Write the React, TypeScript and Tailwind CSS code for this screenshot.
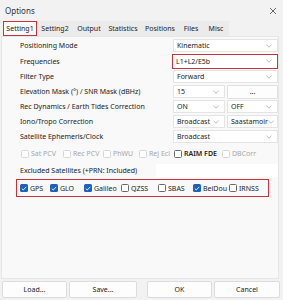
import React from "react";

const font = { fontFamily: '"Noto Sans", "Open Sans", sans-serif' };

function Chevron() {
  return (
    <svg width="6" height="4" viewBox="0 0 6 4" className="shrink-0">
      <polyline points="0.5,0.8 3,3.2 5.5,0.8" fill="none" stroke="#a8a8a8" strokeWidth="0.8" />
    </svg>
  );
}

function Combo({ value, w, red }: { value: string; w: string; red?: boolean }) {
  return (
    <div
      className={`${w} flex items-center justify-between bg-white pl-[3px] pr-[5px] ${
        red ? "h-[15px] border-[1.5px] border-[#c8343e]" : "h-[13px] border border-[#e4e4e4]"
      }`}
    >
      <span className="text-[7px] text-[#222] leading-none">{value}</span>
      <Chevron />
    </div>
  );
}

function Row({ label, children, h = "h-[15px]" }: { label: string; children: React.ReactNode; h?: string }) {
  return (
    <div className={`flex items-center ${h}`}>
      <div className="w-[172px] pl-[18px] text-[7px] text-[#222] leading-none">{label}</div>
      <div className="flex items-center gap-[2px]">{children}</div>
    </div>
  );
}

function Check({ label, checked, disabled, w, bold }: { label: string; checked?: boolean; disabled?: boolean; w: string; bold?: boolean }) {
  return (
    <div className={`${w} flex items-center gap-[2px] shrink-0`}>
      {checked ? (
        <div className="w-[8px] h-[8px] rounded-[1.5px] bg-[#1a62c0] flex items-center justify-center">
          <svg width="6" height="5" viewBox="0 0 6 5">
            <polyline points="0.8,2.6 2.3,4 5.2,0.9" fill="none" stroke="white" strokeWidth="0.9" />
          </svg>
        </div>
      ) : (
        <div
          className={`w-[8px] h-[8px] rounded-[1.5px] border bg-white ${
            disabled ? "border-[#d6d6d6]" : "border-[#6a6a6a]"
          }`}
        />
      )}
      <span
        className={`text-[7px] leading-none ${disabled ? "text-[#a6a6a6]" : "text-[#222]"} ${bold ? "font-semibold" : ""}`}
      >
        {label}
      </span>
    </div>
  );
}

export default function App() {
  const tabs = ["Setting2", "Output", "Statistics", "Positions", "Files", "Misc"];
  const tabW = ["w-[36px]", "w-[32px]", "w-[36px]", "w-[38px]", "w-[24px]", "w-[26px]"];
  return (
    <div className="w-[283px] h-[300px] bg-[#f2f2f2] overflow-hidden flex flex-col" style={font}>
      {/* Title bar */}
      <div className="h-[21px] flex items-center justify-between pl-[5px] pr-[6px]">
        <span className="text-[8px] text-[#333] leading-none">Options</span>
        <svg width="8" height="8" viewBox="0 0 8 8">
          <path d="M1 1 L7 7 M7 1 L1 7" stroke="#444" strokeWidth="0.8" />
        </svg>
      </div>
      {/* Tabs */}
      <div className="h-[15px] flex items-stretch pl-[3px]">
        <div className="w-[34px] border-[1.5px] border-[#c8343e] bg-[#fafafa] flex items-center justify-center text-[7px] text-[#222] leading-none">
          Setting1
        </div>
        <div className="flex items-stretch bg-[#ebebeb]">
          {tabs.map((t, i) => (
            <div key={t} className={`${tabW[i]} flex items-center justify-center text-[7px] text-[#222] leading-none`}>
              {t}
            </div>
          ))}
        </div>
      </div>
      {/* Panel */}
      <div className="mx-[1px] mr-[4px] h-[243px] bg-[#f9f9f9] border border-[#e6e6e6] flex flex-col pt-[1px]">
        <Row label="Positioning Mode">
          <Combo value="Kinematic" w="w-[105px]" />
        </Row>
        <Row label="Frequencies" h="h-[16px]">
          <Combo value="L1+L2/E5b" w="w-[106px]" red />
        </Row>
        <Row label="Filter Type">
          <Combo value="Forward" w="w-[105px]" />
        </Row>
        <Row label="Elevation Mask (°) / SNR Mask (dBHz)">
          <Combo value="15" w="w-[52px]" />
          <div className="w-[51px] h-[14px] bg-[#fdfdfd] border border-[#e0e0e0] rounded-[1px] flex items-center justify-center text-[7px] text-[#222] leading-none">
            ...
          </div>
        </Row>
        <Row label="Rec Dynamics / Earth Tides Correction">
          <Combo value="ON" w="w-[52px]" />
          <Combo value="OFF" w="w-[51px]" />
        </Row>
        <Row label="Iono/Tropo Correction">
          <Combo value="Broadcast" w="w-[52px]" />
          <Combo value="Saastamoir" w="w-[51px]" />
        </Row>
        <Row label="Satellite Ephemeris/Clock">
          <Combo value="Broadcast" w="w-[105px]" />
        </Row>
        <div className="h-[17px] mt-[1px] flex items-center pl-[19px]">
          <Check label="Sat PCV" disabled w="w-[42px]" />
          <Check label="Rec PCV" disabled w="w-[40px]" />
          <Check label="PhWU" disabled w="w-[36px]" />
          <Check label="Rej Ecl" disabled w="w-[35px]" />
          <Check label="RAIM FDE" bold w="w-[48px]" />
          <Check label="DBCorr" disabled w="w-[40px]" />
        </div>
        <div className="h-[17px] flex items-center">
          <div className="w-[154px] pl-[18px] text-[7px] text-[#222] leading-none">Excluded Satellites (+PRN: Included)</div>
          <div className="w-[122px] h-[13px] bg-white" />
        </div>
        <div className="ml-[14px] w-[253px] h-[18px] border-[1.5px] border-[#c8343e] flex items-center pl-[3px]">
          <Check label="GPS" checked w="w-[30px]" />
          <Check label="GLO" checked w="w-[34px]" />
          <Check label="Galileo" checked w="w-[37px]" />
          <Check label="QZSS" w="w-[37px]" />
          <Check label="SBAS" w="w-[35px]" />
          <Check label="BeiDou" checked w="w-[36px]" />
          <Check label="IRNSS" w="w-[36px]" />
        </div>
      </div>
      {/* Buttons */}
      <div className="mt-[2px] flex pl-[2px] h-[17px]">
        {[
          ["Load...", "w-[65px]", "mr-[2px]"],
          ["Save...", "w-[68px]", "mr-[10px]"],
          ["OK", "w-[65px]", "mr-[2px]"],
          ["Cancel", "w-[66px]", ""],
        ].map(([t, w, m]) => (
          <div
            key={t}
            className={`${w} ${m} h-[17px] bg-[#fdfdfd] border border-[#dcdcdc] rounded-[2px] flex items-center justify-center text-[7px] text-[#222] leading-none`}
          >
            {t}
          </div>
        ))}
      </div>
    </div>
  );
}
